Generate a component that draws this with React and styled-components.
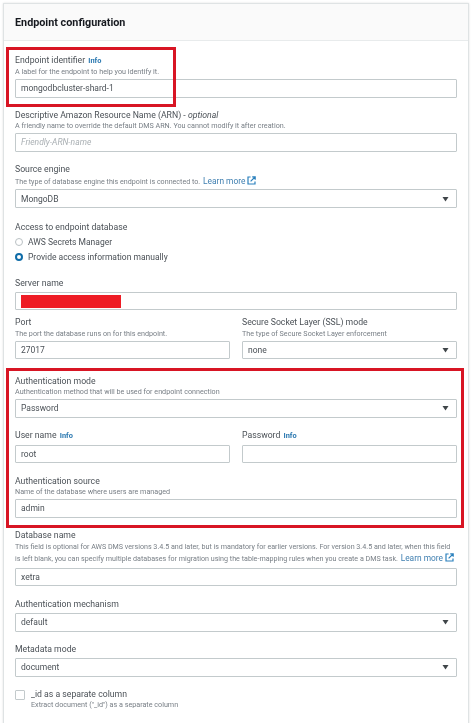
import styled, { createGlobalStyle } from 'styled-components';

const GlobalStyle = createGlobalStyle`
  html, body {
    margin: 0;
    padding: 0;
    background: #fff;
  }

  body {
    font-family: Roboto, "Liberation Sans", sans-serif;
    color: #3a3f45;
  }
`

const Page = styled.div`
  width: 474px;
  height: 723px;
  overflow: hidden;
  box-sizing: border-box;
  padding: 3px 5px 0 3px;
  filter: blur(0.3px);
`

const Panel = styled.section`
  height: 722px;
  box-sizing: border-box;
  border: 1px solid #dfe3e4;
  box-shadow: 0 0 2px rgba(0, 0, 0, 0.12);
`

const PanelHeader = styled.header`
  height: 37px;
  box-sizing: border-box;
  display: flex;
  align-items: center;
  padding: 0 11px;
  background: #fafafa;
  border-bottom: 1px solid #e8ebec;
`

const Title = styled.h2`
  margin: 0;
  font-size: 10.8px;
  font-weight: 700;
  color: #16191f;
`

const PanelBody = styled.div`
  display: flex;
  flex-direction: column;
  gap: 11.6px;
  padding: 13px 11px 0 11px;
`

const Field = styled.div`
  position: relative;
  display: flex;
  flex-direction: column;
  min-width: 0;
  margin-top: ${props => props.$top || 0}px;
`

const Label = styled.div`
  font-size: 8.7px;
  line-height: 12px;
  color: #4b5157;
  margin-bottom: ${props => props.$gap || 0}px;
`

const Info = styled.a`
  font-size: 7.4px;
  font-weight: 700;
  color: #2a78b0;
  margin-left: 1px;
`

const Optional = styled.i`
  color: #4b5157;
`

const Description = styled.div`
  font-size: ${props => props.$size || 7.2}px;
  line-height: ${props => props.$lineHeight || 11}px;
  color: #777e85;
  margin-top: ${props => props.$top ?? -1.5}px;
  margin-bottom: ${props => props.$gap ?? 2.5}px;
`

const LearnMore = styled.a`
  display: inline-flex;
  align-items: center;
  gap: 2px;
  font-size: 8.4px;
  line-height: 10px;
  color: #3f7fb0;
  margin-left: 1px;
  vertical-align: baseline;
`

const TextInput = styled.input`
  display: block;
  width: 100%;
  height: 18.6px;
  box-sizing: border-box;
  padding: 0 5px;
  border: 1px solid #c3cacc;
  border-radius: 1px;
  background: #fff;
  font-family: inherit;
  font-size: 8.5px;
  color: #4b5157;
  outline: none;

  &::placeholder {
    font-style: italic;
    color: #a9afb3;
  }
`

const SelectBox = styled.div`
  height: 18.6px;
  box-sizing: border-box;
  display: flex;
  align-items: center;
  justify-content: space-between;
  padding: 0 7px 0 5px;
  border: 1px solid #c3cacc;
  border-radius: 1px;
  font-size: 8.5px;
  color: #4b5157;
`

const RedactedInput = styled.div`
  height: 18px;
  box-sizing: border-box;
  display: flex;
  align-items: center;
  padding: 0 5px;
  border: 1px solid #c3cacc;
  border-radius: 1px;
`

const Redaction = styled.div`
  width: 100px;
  height: 13px;
  background: #ee1c25;
`

const Row = styled.div`
  display: grid;
  grid-template-columns: 1fr 1fr;
  gap: 12px;
  margin-top: ${props => props.$top || 0}px;
`

const RadioGroup = styled.div`
  display: flex;
  flex-direction: column;
  gap: 7px;
  margin-top: 1px;
  margin-bottom: 5px;
`

const RadioRow = styled.div`
  display: flex;
  align-items: center;
  gap: 5px;
  height: 8px;
  font-size: 8.5px;
  color: #4b5157;
`

const RadioDot = styled.span`
  width: 8px;
  height: 8px;
  flex: none;
  box-sizing: border-box;
  border-radius: 50%;
  border: ${props => (props.$checked ? '2.6px solid #0f6ca8' : '1px solid #b9c0c3')};
  background: #fff;
`

const CheckRow = styled.div`
  display: flex;
  gap: 6px;
`

const CheckBox = styled.span`
  width: 8px;
  height: 8px;
  flex: none;
  margin-top: 2px;
  border: 1px solid #c3cacc;
  border-radius: 1px;
`

const AuthSection = styled.div`
  position: relative;
  display: flex;
  flex-direction: column;
  gap: 12px;
  margin-top: 4px;
`

const Highlight = styled.div`
  position: absolute;
  top: ${props => props.$top}px;
  left: -9px;
  right: ${props => props.$right}px;
  bottom: ${props => props.$bottom}px;
  border: 3px solid #d81524;
  pointer-events: none;
`

const Caret = () => (
  <svg width="7" height="6" viewBox="0 0 7 6">
    <path d="M0.5 1h6L3.5 5.5z" fill="#3f4549" />
  </svg>
)

const ExternalIcon = () => (
  <svg width="9" height="9" viewBox="0 0 9 9" fill="none" stroke="#2a80bd" strokeWidth="1.2">
    <path d="M3.6 1H1v7h7V5.4" />
    <path d="M3.6 5.4L8 1M5.2 .8h3v3" />
  </svg>
)

const Select = ({ value }) => (
  <SelectBox>
    {value}
    <Caret />
  </SelectBox>
)

const App = () => {
  return (
    <Page>
      <GlobalStyle />
      <Panel>
        <PanelHeader>
          <Title>Endpoint configuration</Title>
        </PanelHeader>
        <PanelBody>
          <Field>
            <Highlight $top={-7} $right={281} $bottom={-9} />
            <Label>Endpoint identifier <Info>Info</Info></Label>
            <Description>A label for the endpoint to help you identify it.</Description>
            <TextInput readOnly value="mongodbcluster-shard-1" />
          </Field>

          <Field>
            <Label>Descriptive Amazon Resource Name (ARN) - <Optional>optional</Optional></Label>
            <Description>A friendly name to override the default DMS ARN. You cannot modify it after creation.</Description>
            <TextInput readOnly placeholder="Friendly-ARN-name" />
          </Field>

          <Field>
            <Label>Source engine</Label>
            <Description $size={7.15} $lineHeight={12} $top={0.5} $gap={1.5}>
              The type of database engine this endpoint is connected to. <LearnMore>Learn more <ExternalIcon /></LearnMore>
            </Description>
            <Select value="MongoDB" />
          </Field>

          <Field $top={1}>
            <Label $gap={4}>Access to endpoint database</Label>
            <RadioGroup>
              <RadioRow><RadioDot />AWS Secrets Manager</RadioRow>
              <RadioRow><RadioDot $checked />Provide access information manually</RadioRow>
            </RadioGroup>
          </Field>

          <Field>
            <Label $gap={3}>Server name</Label>
            <RedactedInput><Redaction /></RedactedInput>
          </Field>

          <Row $top={-6}>
            <Field>
              <Label>Port</Label>
              <Description $top={0.5} $gap={1.5}>The port the database runs on for this endpoint.</Description>
              <TextInput readOnly value="27017" />
            </Field>
            <Field>
              <Label>Secure Socket Layer (SSL) mode</Label>
              <Description $top={0.5} $gap={1.5}>The type of Secure Socket Layer enforcement</Description>
              <Select value="none" />
            </Field>
          </Row>

          <AuthSection>
            <Highlight $top={-7} $right={-7} $bottom={-10} />
            <Field>
              <Label>Authentication mode</Label>
              <Description $top={-0.5} $gap={1.5}>Authentication method that will be used for endpoint connection</Description>
              <Select value="Password" />
            </Field>
            <Row $top={-1}>
              <Field>
                <Label $gap={3}>User name <Info>Info</Info></Label>
                <TextInput readOnly value="root" />
              </Field>
              <Field>
                <Label $gap={3}>Password <Info>Info</Info></Label>
                <TextInput readOnly />
              </Field>
            </Row>
            <Field>
              <Label>Authentication source</Label>
              <Description>Name of the database where users are managed</Description>
              <TextInput readOnly value="admin" />
            </Field>
          </AuthSection>

          <Field>
            <Label>Database name</Label>
            <Description $size={7.15} $lineHeight={12} $top={-0.5} $gap={3}>
              This field is optional for AWS DMS versions 3.4.5 and later, but is mandatory for earlier versions. For version 3.4.5 and later, when this field is left blank, you can specify multiple databases for migration using the table-mapping rules when you create a DMS task. <LearnMore>Learn more <ExternalIcon /></LearnMore>
            </Description>
            <TextInput readOnly value="xetra" />
          </Field>

          <Field>
            <Label $gap={3}>Authentication mechanism</Label>
            <Select value="default" />
          </Field>

          <Field>
            <Label $gap={3}>Metadata mode</Label>
            <Select value="document" />
          </Field>

          <CheckRow>
            <CheckBox />
            <div>
              <Label>_id as a separate column</Label>
              <Description>Extract document ("_id") as a separate column</Description>
            </div>
          </CheckRow>
        </PanelBody>
      </Panel>
    </Page>
  )
};

export default App;
